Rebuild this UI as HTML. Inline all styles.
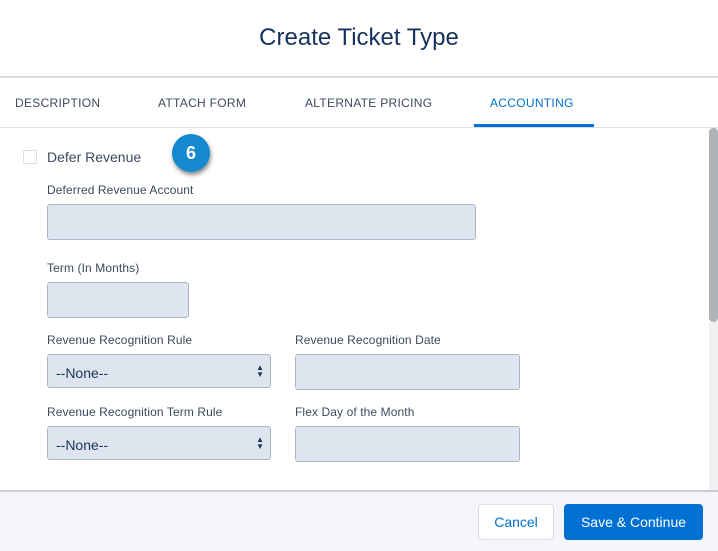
<!DOCTYPE html><html><head><style>
body{margin:0;width:718px;height:551px;overflow:hidden;background:#fff;font-family:"Liberation Sans",sans-serif;position:relative;color:#3e4a5e}
.a{position:absolute}
.lbl{position:absolute;font-size:12px;color:#3e4a5e;letter-spacing:.1px}
.in{position:absolute;background:#dfe5ee;border:1px solid #a8b6c8;border-radius:3px;box-sizing:border-box}
.sel{font-size:14px;color:#16325c;padding:10px 0 0 8px}
.arr{position:absolute;right:6px;top:9px;font-size:8px;line-height:7px;color:#16325c}
.tab{position:absolute;top:96px;font-size:12px;letter-spacing:.3px;color:#3e4a5e}
</style></head><body>
<div class="a" style="left:0;top:24px;width:718px;text-align:center;font-size:24px;color:#16325c">Create Ticket Type</div>
<div class="a" style="left:0;top:76px;width:718px;height:2px;background:#d8dde6"></div>
<div class="tab" style="left:15px">DESCRIPTION</div>
<div class="tab" style="left:158px">ATTACH FORM</div>
<div class="tab" style="left:305px">ALTERNATE PRICING</div>
<div class="tab" style="left:490px;color:#0070d2">ACCOUNTING</div>
<div class="a" style="left:0;top:127px;width:718px;height:1px;background:#d8dde6"></div>
<div class="a" style="left:474px;top:124px;width:120px;height:3px;background:#0070d2"></div>
<div class="a" style="left:709px;top:128px;width:9px;height:194px;background:#b0b4b9;border-radius:4px"></div>
<div class="a" style="left:709px;top:322px;width:9px;height:168px;background:#f0f0f0"></div>
<div class="a" style="left:23px;top:150px;width:14px;height:14px;border:1px solid #d8dde6;border-radius:2px;box-sizing:border-box"></div>
<div class="a" style="left:47px;top:149px;font-size:14px;color:#3e4a5e">Defer Revenue</div>
<div class="a" style="left:172px;top:134px;width:38px;height:38px;border-radius:50%;background:#1589d0;box-shadow:1px 3px 4px rgba(0,0,0,.45);color:#fff;font-weight:bold;font-size:18px;text-align:center;line-height:38px">6</div>
<div class="lbl" style="left:47px;top:183px">Deferred Revenue Account</div>
<div class="in" style="left:47px;top:204px;width:429px;height:36px"></div>
<div class="lbl" style="left:47px;top:261px">Term (In Months)</div>
<div class="in" style="left:47px;top:282px;width:142px;height:36px"></div>
<div class="lbl" style="left:47px;top:333px">Revenue Recognition Rule</div>
<div class="lbl" style="left:295px;top:333px">Revenue Recognition Date</div>
<div class="in sel" style="left:47px;top:354px;width:224px;height:34px">--None--<div class="arr">▲<br>▼</div></div>
<div class="in" style="left:295px;top:354px;width:225px;height:36px"></div>
<div class="lbl" style="left:47px;top:405px">Revenue Recognition Term Rule</div>
<div class="lbl" style="left:295px;top:405px">Flex Day of the Month</div>
<div class="in sel" style="left:47px;top:426px;width:224px;height:34px">--None--<div class="arr">▲<br>▼</div></div>
<div class="in" style="left:295px;top:426px;width:225px;height:36px"></div>
<div class="a" style="left:0;top:490px;width:718px;height:61px;background:#f4f6f9;border-top:2px solid #c9ced6;box-sizing:border-box"></div>
<div class="a" style="left:478px;top:504px;width:76px;height:36px;background:#fff;border:1px solid #d8dde6;border-radius:4px;box-sizing:border-box;color:#0070d2;font-size:14px;text-align:center;line-height:34px">Cancel</div>
<div class="a" style="left:564px;top:504px;width:139px;height:36px;background:#0070d2;border-radius:4px;color:#fff;font-size:14px;text-align:center;line-height:36px">Save &amp; Continue</div>
</body></html>
